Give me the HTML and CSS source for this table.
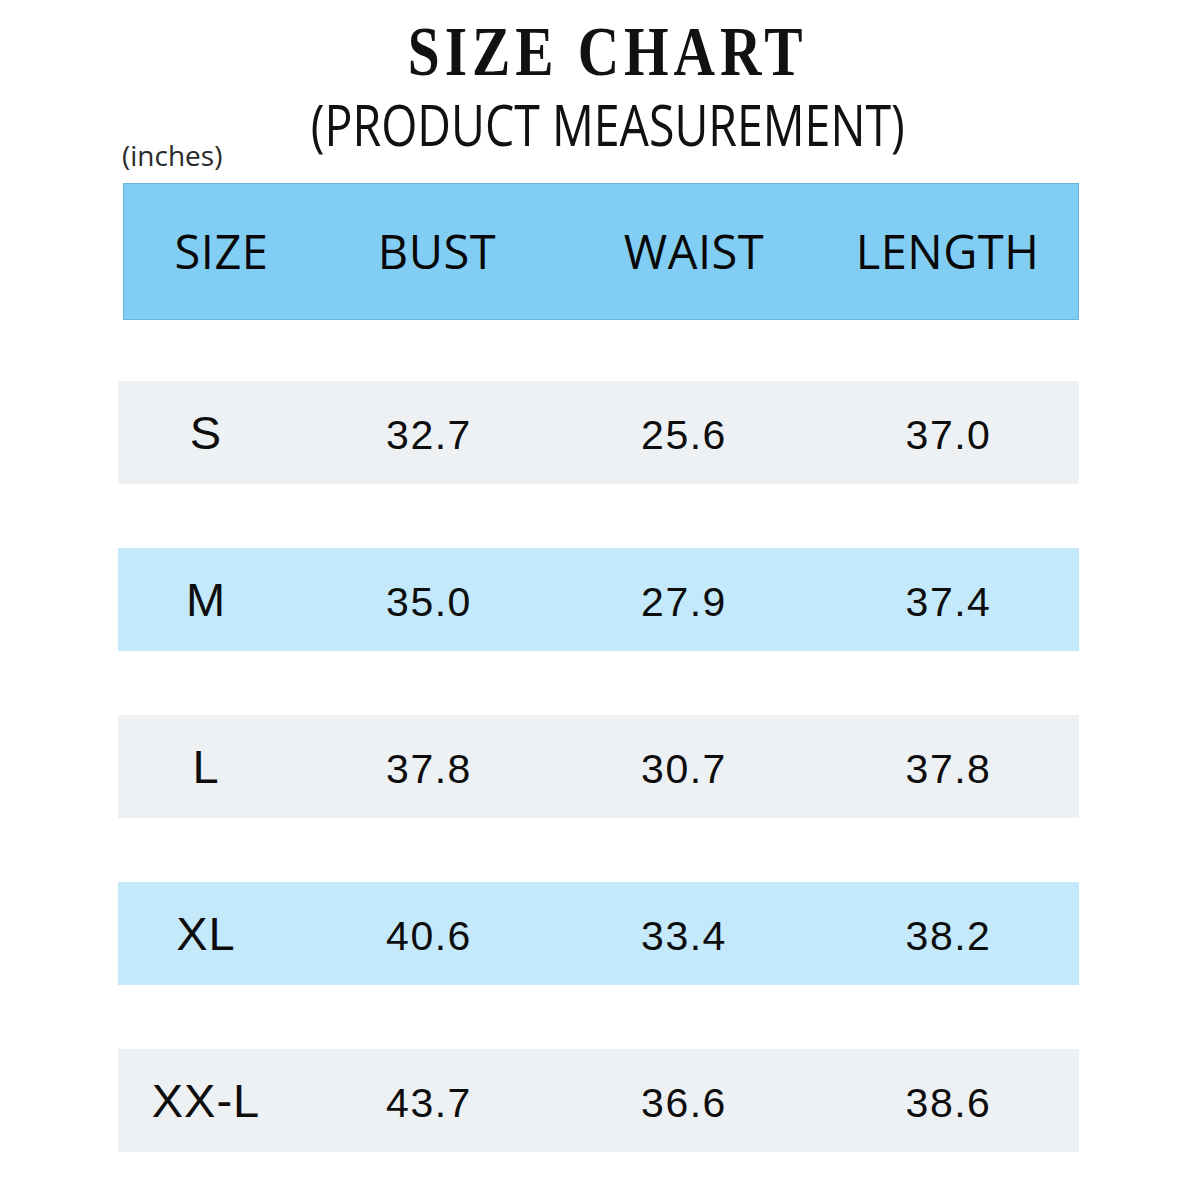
FILE: index.html
```html
<!DOCTYPE html>
<html lang="en">
<head>
<meta charset="utf-8">
<title>Size Chart</title>
<link rel="stylesheet" href="styles.css">
</head>
<body>
<div class="page">
  <header class="heading">
    <div class="title-wrap"><h1 class="title">SIZE CHART</h1></div>
    <div class="subtitle"><span class="subtitle-text">(PRODUCT MEASUREMENT)</span></div>
  </header>
  <div class="unit">(inches)</div>
  <div class="chart">
    <div class="head-row">
      <div class="hc">SIZE</div>
      <div class="hc">BUST</div>
      <div class="hc">WAIST</div>
      <div class="hc hc-last">LENGTH</div>
    </div>
    <div class="rows">
      <div class="row row-gray">
        <div class="cell size">S</div>
        <div class="cell num">32.7</div>
        <div class="cell num">25.6</div>
        <div class="cell num last">37.0</div>
      </div>
      <div class="row row-blue">
        <div class="cell size">M</div>
        <div class="cell num">35.0</div>
        <div class="cell num">27.9</div>
        <div class="cell num last">37.4</div>
      </div>
      <div class="row row-gray">
        <div class="cell size">L</div>
        <div class="cell num">37.8</div>
        <div class="cell num">30.7</div>
        <div class="cell num last">37.8</div>
      </div>
      <div class="row row-blue">
        <div class="cell size">XL</div>
        <div class="cell num">40.6</div>
        <div class="cell num">33.4</div>
        <div class="cell num last">38.2</div>
      </div>
      <div class="row row-gray">
        <div class="cell size">XX-L</div>
        <div class="cell num">43.7</div>
        <div class="cell num">36.6</div>
        <div class="cell num last">38.6</div>
      </div>
    </div>
  </div>
</div>
</body>
</html>
```
FILE: styles.css
```css
* { box-sizing: border-box; }
html, body { margin: 0; padding: 0; background: #ffffff; }
body { color: #0d0d0d; }

.page {
  width: 1200px;
  height: 1200px;
  overflow: hidden;
  padding-top: 18px;
}

.heading {
  padding-left: 15px;
  text-align: center;
}

.title-wrap { height: 68px; }

.title {
  display: inline-block;
  margin: 0;
  font-family: "Liberation Serif", "Times New Roman", serif;
  font-weight: bold;
  font-size: 70px;
  line-height: 68px;
  letter-spacing: 6px;
  color: #111;
  transform: scaleX(0.82);
  transform-origin: center;
}

.subtitle {
  margin-top: 10px;
  height: 56px;
}

.subtitle-text {
  display: inline-block;
  font-family: "Open Sans", sans-serif;
  font-size: 56px;
  line-height: 56px;
  color: #111;
  transform: scaleX(0.83);
  transform-origin: center;
}

.unit {
  margin-top: -10px;
  margin-left: 122px;
  font-family: "Open Sans", sans-serif;
  font-size: 28px;
  line-height: 27px;
  color: #2a2a2a;
}

.chart {
  margin-top: 14px;
  margin-left: 118px;
  width: 961px;
}

.head-row {
  margin-left: 5px;
  height: 137px;
  background: #82cdf4;
  border: 1px solid #6cb3dc;
  display: grid;
  grid-template-columns: 195px 236px 278px 1fr;
  align-items: center;
  font-family: "Open Sans", sans-serif;
  font-size: 47px;
  line-height: 1;
  letter-spacing: 0.5px;
  color: #080808;
}

.hc { text-align: center; }
.hc-last { padding-right: 16px; }

.rows {
  margin-top: 61px;
  display: flex;
  flex-direction: column;
  gap: 64px;
}

.row {
  height: 103px;
  display: grid;
  grid-template-columns: 176px 270px 240px 1fr;
  align-items: baseline;
  align-content: center;
  font-family: "Liberation Sans", Arial, sans-serif;
  color: #0d0d0d;
}

.row-gray { background: #eef1f4; }
.row-blue { background: #c3e9fa; }

.cell {
  text-align: center;
  line-height: 1;
}

.size {
  font-size: 47px;
  letter-spacing: 1px;
}

.num {
  font-size: 41px;
  letter-spacing: 1.5px;
}

.last { padding-left: 14px; }
```
